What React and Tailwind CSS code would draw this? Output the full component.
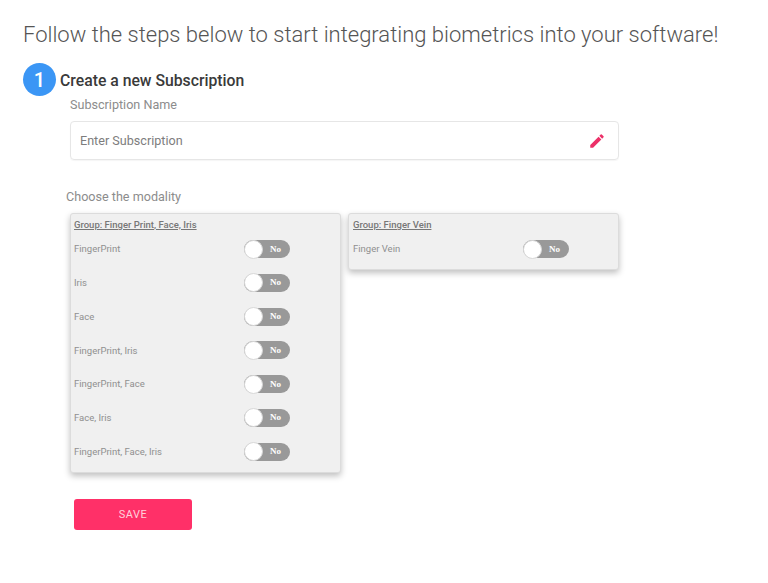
import React from 'react';

function Toggle() {
  return (
    <div className="relative w-[46px] h-[18px] rounded-full bg-[#999999] flex items-center justify-end pr-[9px]">
      <span className="text-[9px] font-bold text-white leading-none font-['Liberation_Serif',serif]">No</span>
      <span className="absolute left-0 top-[-0.5px] w-[19px] h-[19px] rounded-full bg-white border border-[#d8d8d8]" />
    </div>
  );
}

function Row({ label }) {
  return (
    <div className="flex items-center h-[18px] mb-[15.75px] last:mb-0">
      <span className="w-[170px] text-[9.5px] text-[#8f8f8f] leading-none">{label}</span>
      <Toggle />
    </div>
  );
}

function Group({ title, items, className }) {
  return (
    <div className={`bg-[#f0f0f0] rounded-[3px] border border-[#dcdcdc] shadow-[0_3px_6px_rgba(0,0,0,0.25)] pt-[5px] ${className}`}>
      <div className="text-[9.5px] font-medium text-[#777777] underline leading-[12px] mb-[9px]">{title}</div>
      {items.map((i) => <Row key={i} label={i} />)}
    </div>
  );
}

export default function App() {
  return (
    <div className="w-[768px] h-[583px] bg-white font-['Roboto',sans-serif] pl-[23px] pt-[21px] overflow-hidden">
      <h1 className="text-[22px] font-light text-[#555555] leading-[28px] whitespace-nowrap">
        Follow the steps below to start integrating biometrics into your software!
      </h1>
      <div className="flex items-center mt-[14px] h-[33px]">
        <div className="w-[33px] h-[33px] rounded-full bg-[#3b96f5] text-white text-[20px] font-medium flex items-center justify-center">1</div>
        <div className="ml-[4px] text-[15.75px] font-medium text-[#3a3a3a] pt-[2px]">Create a new Subscription</div>
      </div>
      <div className="ml-[47px] mt-[1px] text-[12.6px] text-[#8c8c8c] leading-[16px]">Subscription Name</div>
      <div className="ml-[47px] mt-[8px] w-[549px] h-[39px] rounded-[4px] border border-[#e6e6e6] flex items-center justify-between pl-[9px] pr-[12px] shadow-[0_1px_1px_rgba(0,0,0,0.04)]">
        <span className="text-[12.6px] text-[#7d7d7d] pt-[1px]">Enter Subscription</span>
        <svg width="18" height="18" viewBox="0 0 24 24" fill="#ec3068">
          <path d="M3 17.25V21h3.75L17.81 9.94l-3.75-3.75L3 17.25zM20.71 7.04a1 1 0 0 0 0-1.41l-2.34-2.34a1 1 0 0 0-1.41 0l-1.83 1.83 3.75 3.75 1.83-1.83z" />
        </svg>
      </div>
      <div className="ml-[43px] mt-[29px] text-[12.6px] text-[#8c8c8c] leading-[16px]">Choose the modality</div>
      <div className="ml-[47px] mt-[8px] flex items-start gap-[7px]">
        <Group
          title="Group: Finger Print, Face, Iris"
          className="w-[271px] h-[260px] pl-[3px]"
          items={["FingerPrint", "Iris", "Face", "FingerPrint, Iris", "FingerPrint, Face", "Face, Iris", "FingerPrint, Face, Iris"]}
        />
        <Group title="Group: Finger Vein" className="w-[271px] h-[57px] pl-[4px]" items={["Finger Vein"]} />
      </div>
      <button className="ml-[51px] mt-[26px] w-[118px] h-[31px] rounded-[3px] bg-[#ff3068] text-[#ffd0dc] text-[11px] tracking-[0.5px] flex items-center justify-center pt-[1px]">
        SAVE
      </button>
    </div>
  );
}
